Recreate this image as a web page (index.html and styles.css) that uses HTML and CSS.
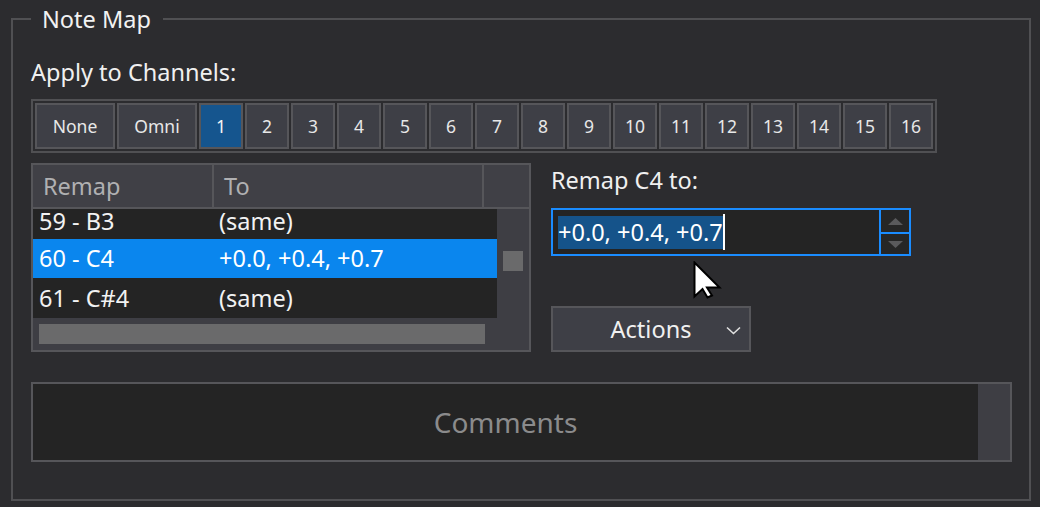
FILE: index.html
```html
<!DOCTYPE html>
<html>
<head>
<meta charset="utf-8">
<link rel="stylesheet" href="styles.css">
</head>
<body>
<fieldset class="notemap">
  <legend class="notemap-title">Note Map</legend>
  <div class="label">Apply to Channels:</div>
  <div class="channels">
    <button class="ch wide">None</button>
    <button class="ch wide">Omni</button>
    <button class="ch sel">1</button>
    <button class="ch">2</button>
    <button class="ch">3</button>
    <button class="ch">4</button>
    <button class="ch">5</button>
    <button class="ch">6</button>
    <button class="ch">7</button>
    <button class="ch">8</button>
    <button class="ch">9</button>
    <button class="ch">10</button>
    <button class="ch">11</button>
    <button class="ch">12</button>
    <button class="ch">13</button>
    <button class="ch">14</button>
    <button class="ch">15</button>
    <button class="ch">16</button>
  </div>
  <div class="mid">
    <div class="table">
      <div class="thead">
        <div class="th c1">Remap</div>
        <div class="th c2">To</div>
        <div class="th c3"></div>
      </div>
      <div class="tbody">
        <div class="viewport">
          <div class="rows">
            <div class="row partial"><span class="td1">59 - B3</span><span class="td2">(same)</span></div>
            <div class="row selected"><span class="td1">60 - C4</span><span class="td2">+0.0, +0.4, +0.7</span></div>
            <div class="row"><span class="td1">61 - C#4</span><span class="td2">(same)</span></div>
          </div>
        </div>
        <div class="vscroll"><div class="vhandle"></div></div>
      </div>
      <div class="hscroll"><div class="hhandle"></div></div>
    </div>
    <div class="side">
      <div class="label side-label">Remap C4 to:</div>
      <div class="spin">
        <div class="spin-text"><span class="selection">+0.0, +0.4, +0.7</span><span class="caret"></span></div>
        <div class="spin-btns">
          <div class="spin-up"><svg width="15" height="7" viewBox="0 0 15 7"><polygon points="7.5,0 15,7 0,7" fill="#5a5a5c"/></svg></div>
          <div class="spin-down"><svg width="15" height="7" viewBox="0 0 15 7"><polygon points="0,0 15,0 7.5,7" fill="#5a5a5c"/></svg></div>
        </div>
      </div>
      <button class="actions"><span>Actions</span><svg class="chev" width="15" height="9" viewBox="0 0 15 9"><polyline points="1,1.5 7.5,7.5 14,1.5" fill="none" stroke="#e0e0e0" stroke-width="1.6"/></svg></button>
    </div>
  </div>
  <div class="comments">
    <div class="comments-text">Comments</div>
    <div class="comments-scroll"></div>
  </div>
</fieldset>
<svg class="pointer" width="32" height="42" viewBox="0 0 32 42"><path d="M1.5 1.5 L1.5 35.5 L9.5 28 L14.5 36.5 L19 34.5 L14 26.5 L26.5 26.5 Z" fill="#ffffff" stroke="#000000" stroke-width="2" stroke-linejoin="miter"/></svg>
</body>
</html>
```
FILE: styles.css
```css
html, body {
  margin: 0;
  padding: 0;
  background: #2c2c2f;
}
body {
  font-family: "Noto Sans", "Open Sans", sans-serif;
  font-size: 23.5px;
  color: #f0f0f0;
  width: 1040px;
  height: 507px;
  overflow: hidden;
  position: relative;
}
.notemap {
  box-sizing: border-box;
  width: 1020px;
  margin: 3px 0 0 11px;
  padding: 21px 0 37px 18px;
  border: 2px solid #505053;
  min-width: 0;
}
.notemap-title {
  padding: 0 12px 0 11px;
  line-height: 32px;
  font-size: 23.5px;
  color: #f2f2f2;
}
.label {
  line-height: 32px;
  height: 32px;
}
.channels {
  display: flex;
  width: max-content;
  gap: 2px;
  padding: 2px;
  border: 2px solid #505053;
  margin-top: 11px;
}
.ch {
  box-sizing: border-box;
  width: 44px;
  height: 46px;
  padding: 0;
  margin: 0;
  border: 2px solid #56565a;
  background: #3e3f46;
  color: #e8e8e8;
  font-family: "Noto Sans", "Open Sans", sans-serif;
  font-size: 17.5px;
  line-height: 42px;
}
.ch.wide {
  width: 80px;
}
.ch.sel {
  background: #15558e;
  color: #f4f4f4;
}
.mid {
  display: flex;
  gap: 20px;
  margin-top: 10px;
  height: 189px;
}
.table {
  box-sizing: border-box;
  width: 500px;
  height: 189px;
  border: 2px solid #56565a;
  background: #3e3e44;
  display: flex;
  flex-direction: column;
}
.thead {
  display: flex;
  height: 42px;
  border-bottom: 2px solid #56565a;
  background: #404046;
}
.th {
  line-height: 42px;
  color: #b0b0b2;
  padding-left: 10px;
  box-sizing: border-box;
}
.th.c1 { width: 181px; border-right: 2px solid #56565a; }
.th.c2 { width: 270px; border-right: 2px solid #56565a; }
.th.c3 { width: 45px; }
.tbody {
  display: flex;
  height: 109px;
}
.viewport {
  width: 464px;
  height: 109px;
  overflow: hidden;
  background: #242424;
}
.row {
  display: flex;
  height: 40px;
  line-height: 40px;
  background: #242424;
  color: #f2f2f2;
}
.row.partial {
  height: 30px;
  line-height: 25px;
}
.row.selected {
  background: #0a86ee;
  color: #ffffff;
  height: 39px;
  line-height: 39px;
}
.td1 {
  width: 180px;
  padding-left: 6px;
  box-sizing: border-box;
}
.td2 {
  padding-left: 6px;
}
.vscroll {
  width: 32px;
  background: #3e3e44;
}
.vhandle {
  width: 20px;
  height: 20px;
  margin: 42px 0 0 6px;
  background: #6a6a6b;
}
.hscroll {
  height: 32px;
  background: #3e3e44;
}
.hhandle {
  width: 446px;
  height: 20px;
  margin: 6px 0 0 6px;
  background: #6a6a6b;
}
.side {
  display: flex;
  flex-direction: column;
  align-items: flex-start;
}
.side-label {
  margin-top: 1px;
}
.spin {
  box-sizing: border-box;
  margin-top: 12px;
  width: 360px;
  height: 48px;
  border: 2px solid #1a8cff;
  display: flex;
}
.spin-text {
  flex: 1;
  background: #242424;
  display: flex;
  align-items: center;
  padding-left: 5px;
}
.selection {
  background: #15538a;
  color: #ffffff;
  line-height: 33px;
  height: 33px;
  display: inline-block;
}
.caret {
  display: inline-block;
  width: 2px;
  height: 36px;
  background: #ffffff;
}
.spin-btns {
  width: 28px;
  border-left: 2px solid #1a8cff;
  display: flex;
  flex-direction: column;
  background: #262626;
}
.spin-up {
  height: 22px;
  border-bottom: 2px solid #1a8cff;
  display: flex;
  align-items: center;
  justify-content: center;
}
.spin-down {
  height: 20px;
  display: flex;
  align-items: center;
  justify-content: center;
}
.actions {
  box-sizing: border-box;
  margin-top: 50px;
  width: 200px;
  height: 46px;
  padding: 0;
  border: 2px solid #56565a;
  background: #3e3f46;
  color: #f0f0f0;
  font-family: "Noto Sans", "Open Sans", sans-serif;
  font-size: 23.5px;
  line-height: 42px;
  position: relative;
  text-align: center;
}
.chev {
  position: absolute;
  right: 8px;
  top: 18px;
}
.comments {
  box-sizing: border-box;
  margin-top: 30px;
  width: 981px;
  height: 80px;
  border: 2px solid #56565a;
  display: flex;
  background: #242424;
}
.comments-text {
  flex: 1;
  text-align: center;
  line-height: 76px;
  font-size: 28px;
  color: #8b8b8c;
}
.comments-scroll {
  width: 32px;
  background: #3e3e44;
}
.pointer {
  position: absolute;
  left: 693px;
  top: 261px;
}
```
